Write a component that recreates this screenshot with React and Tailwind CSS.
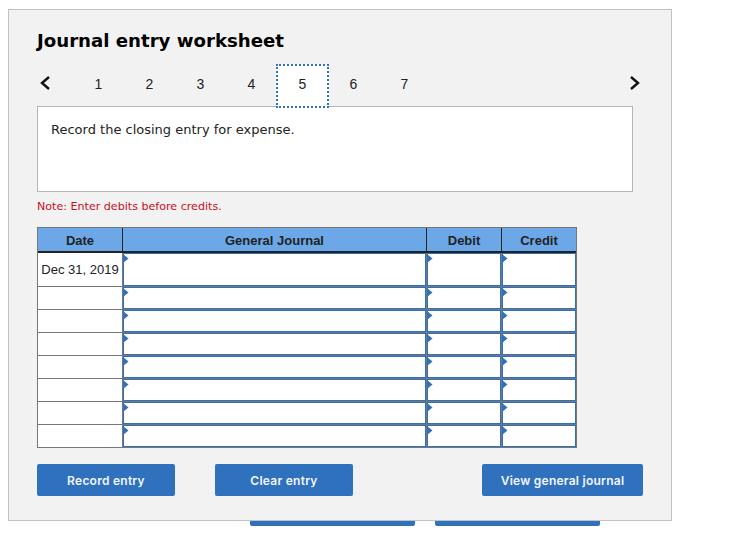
import React from 'react'

const tabs = [1, 2, 3, 4, 5, 6, 7]
const rows = ['Dec 31, 2019', '', '', '', '', '', '', '']

const Chevron = ({ dir }) => (
  <svg width="12" height="16" viewBox="0 0 12 16" fill="none" stroke="#111" strokeWidth="2.4">
    <path d={dir === 'left' ? 'M10 2 L3 8 L10 14' : 'M2 2 L9 8 L2 14'} />
  </svg>
)

const EntryCell = ({ tall }) => (
  <div className={`relative border-r border-b border-[#777] bg-white ${tall ? 'h-[34px]' : 'h-[23px]'}`}>
    <div className="h-full border border-[#2f71bd]" />
    <svg className="absolute left-0 top-[1px]" width="6" height="9" viewBox="0 0 6 9">
      <path d="M0 0 L5.5 4.5 L0 9 Z" fill="#2f71bd" />
    </svg>
  </div>
)

const ActionButton = ({ label, width }) => (
  <button className={`${width} h-[32px] rounded-[2px] bg-[#2f71bd] pt-[1px] font-['Inter',sans-serif] text-[12px] font-semibold tracking-[0.25px] text-[#f2f6fb]`}>
    {label}
  </button>
)

export default function App() {
  return (
    <div className="h-[553px] w-[734px] overflow-hidden bg-white pl-2 pt-[9px]">
      <div className="h-[512px] w-[664px] border border-[#c2c2c2] bg-[#f2f2f2] pl-[28px] font-['DejaVu_Sans',sans-serif]">
        <h1 className="pt-[19px] text-[18.15px] font-bold leading-[23px] text-black">Journal entry worksheet</h1>

        <div className="mt-[12px] flex h-[44px] w-[604px] items-center">
          <div className="w-[36px] pb-[6px] pl-[2px]"><Chevron dir="left" /></div>
          {tabs.map(t => (
            <div
              key={t}
              className={`flex h-[44px] items-center justify-center pb-[4px] font-['Liberation_Sans',sans-serif] text-[14px] text-[#222] ${t === 5
                ? 'relative z-10 -mx-px w-[53px] border-2 border-dotted border-[#2f71bd] bg-white' : 'w-[51px]'}`}
            >
              {t}
            </div>
          ))}
          <div className="ml-auto flex pb-[6px]"><Chevron dir="right" /></div>
        </div>

        <div className="-mt-[2px] h-[86px] w-[596px] border border-[#b5b5b5] bg-white px-[13px] pt-[14px] text-[13px] leading-[17px] text-[#222]">
          Record the closing entry for expense.
        </div>

        <p className="mt-[8px] text-[11.1px] leading-[14px] text-[#c8101a]">Note: Enter debits before credits.</p>

        <div className="mt-[13px] w-[540px] border-l border-t border-[#777] font-['Liberation_Sans',sans-serif] text-[13px]">
          <div className="grid h-[25px] grid-cols-[85px_304px_75px_75px] border-b-2 border-[#222] bg-[#6ca8e8] text-center font-bold leading-[25px] text-[#222]">
            <div className="border-r border-[#222]">Date</div>
            <div className="border-r border-[#222]">General Journal</div>
            <div className="border-r border-[#222]">Debit</div>
            <div className="border-r border-[#777]">Credit</div>
          </div>
          {rows.map((date, i) => (
            <div key={i} className="grid grid-cols-[85px_304px_75px_75px]">
              <div className={`border-r border-b border-[#777] bg-white text-center text-[#222] ${i === 0 ? 'h-[34px] leading-[33px]' : 'h-[23px]'}`}>
                {date}
              </div>
              <EntryCell tall={i === 0} />
              <EntryCell tall={i === 0} />
              <EntryCell tall={i === 0} />
            </div>
          ))}
        </div>

        <div className="mt-[16px] flex w-[606px] justify-between">
          <div className="flex gap-[40px]">
            <ActionButton label="Record entry" width="w-[138px]" />
            <ActionButton label="Clear entry" width="w-[138px]" />
          </div>
          <ActionButton label="View general journal" width="w-[161px]" />
        </div>
      </div>

      {/* buttons from the page behind, only their lower edge shows */}
      <div className="ml-[242px] flex gap-[20px]">
        <div className="h-[5px] w-[165px] rounded-b-[2px] bg-[#2f71bd]" />
        <div className="h-[5px] w-[165px] rounded-b-[2px] bg-[#2f71bd]" />
      </div>
    </div>
  )
}
